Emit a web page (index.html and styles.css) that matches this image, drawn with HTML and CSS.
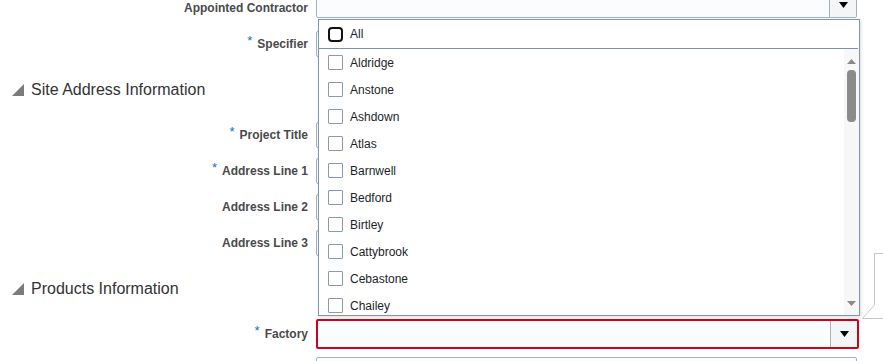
FILE: index.html
```html
<!DOCTYPE html>
<html>
<head>
<meta charset="utf-8">
<link rel="stylesheet" href="styles.css">
</head>
<body>
<div class="page">
  <div class="form">
    <div class="row first">
      <div class="lbl">Appointed Contractor</div>
      <div class="field select"><span class="val"></span><span class="btn"><svg width="9" height="6" viewBox="0 0 9 6"><path d="M0 0H9L4.5 6Z" fill="#000"/></svg></span></div>
    </div>
    <div class="row">
      <div class="lbl"><span class="req">*</span>Specifier</div>
      <div class="field"></div>
    </div>
    <div class="section"><span class="tri"></span>Site Address Information</div>
    <div class="row">
      <div class="lbl"><span class="req">*</span>Project Title</div>
      <div class="field"></div>
    </div>
    <div class="row">
      <div class="lbl"><span class="req">*</span>Address Line 1</div>
      <div class="field"></div>
    </div>
    <div class="row">
      <div class="lbl">Address Line 2</div>
      <div class="field"></div>
    </div>
    <div class="row">
      <div class="lbl">Address Line 3</div>
      <div class="field"></div>
    </div>
    <div class="section"><span class="tri"></span>Products Information</div>
    <div class="row">
      <div class="lbl"><span class="req">*</span>Factory</div>
      <div class="field select error"><span class="val"></span><span class="btn"><svg width="9" height="6" viewBox="0 0 9 6"><path d="M0 0H9L4.5 6Z" fill="#000"/></svg></span></div>
    </div>
    <div class="row">
      <div class="lbl"></div>
      <div class="field"></div>
    </div>
  </div>

  <div class="dropdown">
    <div class="all-row"><span class="cb cb-all"></span><span class="txt">All</span></div>
    <div class="list-wrap">
      <div class="list">
        <div class="item"><span class="cb"></span><span class="txt">Aldridge</span></div>
        <div class="item"><span class="cb"></span><span class="txt">Anstone</span></div>
        <div class="item"><span class="cb"></span><span class="txt">Ashdown</span></div>
        <div class="item"><span class="cb"></span><span class="txt">Atlas</span></div>
        <div class="item"><span class="cb"></span><span class="txt">Barnwell</span></div>
        <div class="item"><span class="cb"></span><span class="txt">Bedford</span></div>
        <div class="item"><span class="cb"></span><span class="txt">Birtley</span></div>
        <div class="item"><span class="cb"></span><span class="txt">Cattybrook</span></div>
        <div class="item"><span class="cb"></span><span class="txt">Cebastone</span></div>
        <div class="item"><span class="cb"></span><span class="txt">Chailey</span></div>
      </div>
      <div class="scrollbar">
        <svg class="arrow" width="9" height="5" viewBox="0 0 9 5"><path d="M0 5H9L4.5 0Z" fill="#8a8a8a"/></svg>
        <div class="thumb"></div>
        <div class="spacer"></div>
        <svg class="arrow" width="9" height="5" viewBox="0 0 9 5"><path d="M0 0H9L4.5 5Z" fill="#8a8a8a"/></svg>
      </div>
    </div>
  </div>

  <svg class="tip" width="30" height="70" viewBox="0 0 30 70">
    <path d="M12.5 0.5H30M12.5 0.5V52L0.5 65.5H30" fill="#fff" stroke="#c6c9cc" stroke-width="1"/>
    <path d="M13 1H30V65H2L13 52.5Z" fill="#fff"/>
  </svg>
</div>
</body>
</html>
```

FILE: styles.css
```css
html, body {
  margin: 0;
  padding: 0;
  background: #fff;
}
body {
  font-family: "Liberation Sans", Arial, sans-serif;
  overflow: hidden;
  width: 883px;
  height: 361px;
}
.page {
  position: relative;
  width: 883px;
  height: 361px;
  overflow: hidden;
}
.form {
  display: flex;
  flex-direction: column;
  margin-top: -10px;
}
.row {
  display: flex;
  align-items: center;
  height: 36px;
  gap: 8px;
}
.lbl {
  width: 308px;
  flex: none;
  text-align: right;
  font-size: 12px;
  font-weight: bold;
  color: #4a4a4a;
  line-height: 14px;
}
.req {
  color: #0572ce;
  font-weight: normal;
  font-size: 13px;
  position: relative;
  top: -3px;
  margin-right: 5px;
}
.field {
  width: 539px;
  height: 24px;
  border: 1px solid #a7b2bd;
  border-radius: 2px;
  background: #fbfcfd;
  display: flex;
  box-sizing: content-box;
}
.row.first .field {
  margin-bottom: 6px;
}
.select .val {
  flex: 1;
}
.select .btn {
  width: 26px;
  border-left: 1px solid #a7b2bd;
  background: #f3f5f7;
  display: flex;
  align-items: center;
  justify-content: center;
}
.select.error {
  border: 2px solid #d0021b;
  height: 26px;
  width: 539px;
}
.section {
  height: 55px;
  display: flex;
  align-items: center;
  padding-left: 12px;
  font-size: 16px;
  color: #333;
}
.tri {
  width: 0;
  height: 0;
  border-left: 12px solid transparent;
  border-bottom: 12px solid #7b7b7b;
  margin-right: 7px;
}
.dropdown {
  position: absolute;
  left: 318px;
  top: 19px;
  width: 540px;
  height: 295px;
  border: 1px solid #8296aa;
  background: #fff;
  box-shadow: 1px 1px 3px rgba(0,0,0,0.15);
  display: flex;
  flex-direction: column;
  font-size: 12px;
  color: #1c1f2a;
}
.all-row {
  height: 28px;
  flex: none;
  display: flex;
  align-items: center;
  padding-left: 9px;
  border-bottom: 1px solid #7d92a6;
  margin-right: 1px;
}
.cb {
  width: 13px;
  height: 13px;
  border: 1px solid #8c9aa7;
  border-radius: 1px;
  background: #fff;
  flex: none;
}
.cb.cb-all {
  width: 11px;
  height: 11px;
  border: 2px solid #111;
  border-radius: 4px;
}
.txt {
  margin-left: 7px;
  line-height: 14px;
}
.list-wrap {
  flex: 1;
  display: flex;
  overflow: hidden;
}
.list {
  flex: 1;
  display: flex;
  flex-direction: column;
  overflow: hidden;
}
.item {
  height: 27px;
  flex: none;
  display: flex;
  align-items: center;
  padding-left: 9px;
}
.scrollbar {
  width: 15px;
  flex: none;
  background: #f7f7f7;
  display: flex;
  flex-direction: column;
  align-items: center;
  padding: 10px 0 9px;
}
.thumb {
  width: 9px;
  height: 52px;
  margin-top: 6px;
  border-radius: 4px;
  background: #8b8b8b;
}
.spacer {
  flex: 1;
}
.tip {
  position: absolute;
  left: 862px;
  top: 253px;
}
```
